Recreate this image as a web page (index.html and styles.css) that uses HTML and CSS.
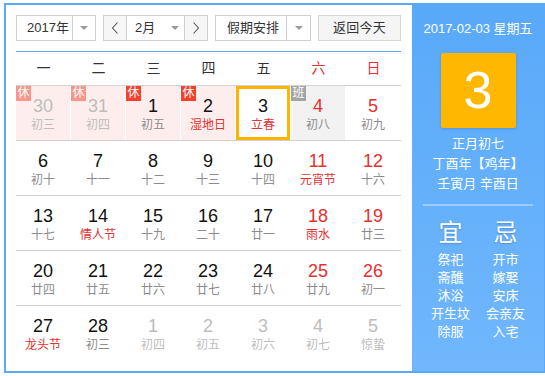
FILE: index.html
```html
<!DOCTYPE html>
<html lang="zh-CN">
<head>
<meta charset="utf-8">
<title>万年历</title>
<link rel="stylesheet" href="styles.css">
</head>
<body>
<div class="cal">
  <div class="main">
    <div class="toolbar">
      <div class="select year">
        <span class="label">2017年</span>
        <span class="drop"><i class="tri"></i></span>
      </div>
      <div class="month-group">
        <span class="nav nav-prev"><svg width="8" height="12" viewBox="0 0 8 12"><polyline points="6.5,0.5 1.5,6 6.5,11.5" fill="none" stroke="#555" stroke-width="1.1"/></svg></span>
        <span class="month"><span class="label">2月</span><i class="tri"></i></span>
        <span class="nav nav-next"><svg width="8" height="12" viewBox="0 0 8 12"><polyline points="1.5,0.5 6.5,6 1.5,11.5" fill="none" stroke="#555" stroke-width="1.1"/></svg></span>
      </div>
      <div class="select holiday">
        <span class="label">假期安排</span>
        <span class="drop"><i class="tri"></i></span>
      </div>
      <div class="today-btn">返回今天</div>
    </div>
    <div class="weekdays">
      <span>一</span><span>二</span><span>三</span><span>四</span><span>五</span><span class="we">六</span><span class="we">日</span>
    </div>
    <div class="rows">
      <div class="row">
        <div class="cell rest other"><i class="badge rest-faded">休</i><b>30</b><em>初三</em></div>
        <div class="cell rest other"><i class="badge rest-faded">休</i><b>31</b><em>初四</em></div>
        <div class="cell rest"><i class="badge">休</i><b>1</b><em>初五</em></div>
        <div class="cell rest"><i class="badge">休</i><b>2</b><em class="fest">湿地日</em></div>
        <div class="cell today"><b>3</b><em class="fest">立春</em></div>
        <div class="cell work weekend"><i class="badge work-badge">班</i><b>4</b><em>初八</em></div>
        <div class="cell weekend"><b>5</b><em>初九</em></div>
      </div>
      <div class="row">
        <div class="cell"><b>6</b><em>初十</em></div>
        <div class="cell"><b>7</b><em>十一</em></div>
        <div class="cell"><b>8</b><em>十二</em></div>
        <div class="cell"><b>9</b><em>十三</em></div>
        <div class="cell"><b>10</b><em>十四</em></div>
        <div class="cell weekend"><b>11</b><em class="fest">元宵节</em></div>
        <div class="cell weekend"><b>12</b><em>十六</em></div>
      </div>
      <div class="row">
        <div class="cell"><b>13</b><em>十七</em></div>
        <div class="cell"><b>14</b><em class="fest">情人节</em></div>
        <div class="cell"><b>15</b><em>十九</em></div>
        <div class="cell"><b>16</b><em>二十</em></div>
        <div class="cell"><b>17</b><em>廿一</em></div>
        <div class="cell weekend"><b>18</b><em class="fest">雨水</em></div>
        <div class="cell weekend"><b>19</b><em>廿三</em></div>
      </div>
      <div class="row">
        <div class="cell"><b>20</b><em>廿四</em></div>
        <div class="cell"><b>21</b><em>廿五</em></div>
        <div class="cell"><b>22</b><em>廿六</em></div>
        <div class="cell"><b>23</b><em>廿七</em></div>
        <div class="cell"><b>24</b><em>廿八</em></div>
        <div class="cell weekend"><b>25</b><em>廿九</em></div>
        <div class="cell weekend"><b>26</b><em>初一</em></div>
      </div>
      <div class="row">
        <div class="cell"><b>27</b><em class="fest">龙头节</em></div>
        <div class="cell"><b>28</b><em>初三</em></div>
        <div class="cell other"><b>1</b><em>初四</em></div>
        <div class="cell other"><b>2</b><em>初五</em></div>
        <div class="cell other"><b>3</b><em>初六</em></div>
        <div class="cell other"><b>4</b><em>初七</em></div>
        <div class="cell other"><b>5</b><em>惊蛰</em></div>
      </div>
    </div>
  </div>
  <div class="side">
    <div class="side-date">2017-02-03 星期五</div>
    <div class="big-day">3</div>
    <div class="lunar">
      <div>正月初七</div>
      <div>丁酉年【鸡年】</div>
      <div>壬寅月 辛酉日</div>
    </div>
    <div class="sep"></div>
    <div class="yiji">
      <div class="col">
        <div class="head">宜</div>
        <div>祭祀</div><div>斋醮</div><div>沐浴</div><div>开生坟</div><div>除服</div>
      </div>
      <div class="col">
        <div class="head">忌</div>
        <div>开市</div><div>嫁娶</div><div>安床</div><div>会亲友</div><div>入宅</div>
      </div>
    </div>
  </div>
</div>
</body>
</html>
```

FILE: styles.css
```css
* { box-sizing: border-box; }
html, body { margin: 0; padding: 0; background: #fff; overflow: hidden; }
body {
  font-family: "Liberation Sans", "Noto Sans CJK SC", sans-serif;
  color: #333;
}
.cal {
  margin: 3px 0 0 4px;
  width: 542px;
  height: 370px;
  border: 2px solid #5aa9f8;
  display: flex;
}
.main {
  width: 406px;
  padding: 10px 11px 0 10px;
  background: #fff;
}
.toolbar {
  display: flex;
  gap: 7px;
  height: 26px;
  font-size: 13px;
  color: #333;
}
.select {
  display: flex;
  border: 1px solid #cfcfcf;
  height: 26px;
  background: #fff;
}
.select .label {
  line-height: 24px;
  padding-left: 10px;
}
.year { width: 80px; }
.year .label { width: 55px; }
.holiday { width: 96px; }
.holiday .label { width: 70px; padding-left: 11px; }
.drop {
  flex: 1;
  border-left: 1px solid #cfcfcf;
  display: flex;
  align-items: center;
  justify-content: center;
}
.tri {
  display: block;
  width: 0; height: 0;
  border-left: 4px solid transparent;
  border-right: 4px solid transparent;
  border-top: 4px solid #9a9a9a;
}
.month-group {
  display: flex;
  width: 105px;
  height: 26px;
  border: 1px solid #cfcfcf;
}
.nav {
  width: 23px;
  background: #f6f6f6;
  display: flex;
  align-items: center;
  justify-content: center;
}
.nav-prev { border-right: 1px solid #cfcfcf; }
.nav-next { border-left: 1px solid #cfcfcf; }
.month {
  flex: 1;
  display: flex;
  align-items: center;
  padding-left: 8px;
}
.month .label { line-height: 24px; width: 36px; }
.today-btn {
  width: 83px;
  height: 26px;
  border: 1px solid #d6d6d6;
  background: #f5f5f5;
  text-align: center;
  line-height: 24px;
  letter-spacing: 0.3px;
}
.weekdays {
  margin-top: 10px;
  border-top: 1px solid #5aa9f8;
  display: grid;
  grid-template-columns: repeat(7, 55px);
  height: 34px;
}
.weekdays span {
  text-align: center;
  line-height: 33px;
  font-size: 14px;
  color: #333;
}
.weekdays .we { color: #e5302f; }
.row {
  display: grid;
  grid-template-columns: repeat(7, 55px);
  border-top: 1px solid #d2d2d2;
  height: 55px;
}
.cell {
  position: relative;
  width: 54px;
  height: 54px;
  padding-top: 10px;
  text-align: center;
}
.cell b {
  display: block;
  font-weight: normal;
  font-size: 18px;
  line-height: 20px;
  color: #111;
}
.cell em {
  display: block;
  font-style: normal;
  font-size: 12px;
  line-height: 18px;
  color: #8c8c8c;
}
.cell.weekend b { color: #e5302f; }
.cell em.fest { color: #e5302f; }
.cell.other b, .cell.other em { color: #bdbdbd; }
.cell.rest { background: #fdeeed; }
.cell.work { background: #f2f2f2; }
.cell.today { box-shadow: inset 0 0 0 3px #ffb400; }
.badge {
  position: absolute;
  top: 0; left: 0;
  width: 15px; height: 15px;
  font-style: normal;
  font-size: 12px;
  line-height: 15px;
  text-align: center;
  color: #fff;
  background: #f3412f;
}
.badge.rest-faded { background: #f7978c; }
.badge.work-badge { background: #a3a3a3; }

.side {
  width: 132px;
  background: linear-gradient(#59a9f9, #70b7fd);
  color: #fff;
  text-align: center;
  padding-top: 14px;
}
.side-date {
  font-size: 13px;
  line-height: 20px;
}
.big-day {
  width: 75px;
  height: 75px;
  margin: 14px auto 0;
  background: #ffb700;
  border-radius: 2px;
  box-shadow: 0 1px 3px rgba(0, 0, 0, 0.15);
  font-size: 52px;
  line-height: 75px;
  color: #fff;
}
.lunar {
  margin-top: 6px;
  font-size: 13px;
  line-height: 20px;
}
.sep {
  width: 110px;
  height: 2px;
  margin: 10px auto 0;
  background: rgba(255, 255, 255, 0.35);
}
.yiji {
  width: 110px;
  margin: 12px auto 0;
  display: flex;
}
.col {
  width: 55px;
  font-size: 13px;
  line-height: 18px;
}
.col .head {
  font-size: 24px;
  line-height: 30px;
  margin-bottom: 3px;
  text-shadow: 0 1px 2px rgba(0, 0, 0, 0.2);
}
```
